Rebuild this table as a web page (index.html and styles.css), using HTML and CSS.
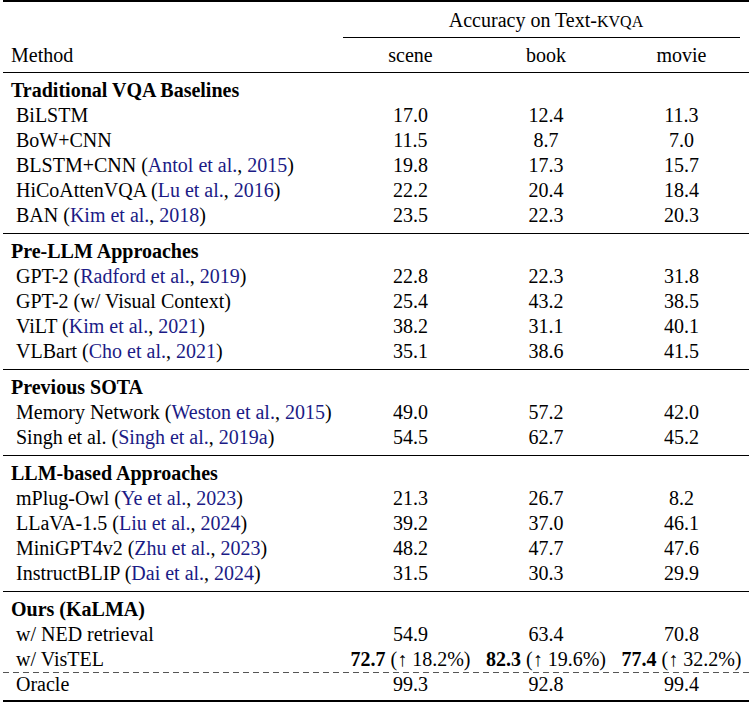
FILE: index.html
```html
<!DOCTYPE html>
<html lang="en">
<head>
<meta charset="utf-8">
<title>Accuracy on Text-KVQA</title>
<link rel="stylesheet" href="styles.css">
</head>
<body>
<div class="table">
  <div class="head">
    <div class="row">
      <div></div>
      <div class="acc"><span>Accuracy on Text-<span class="sc">kvqa</span></span></div>
    </div>
    <div class="cmid"></div>
    <div class="row">
      <div class="lbl">Method</div><div class="num">scene</div><div class="num">book</div><div class="num">movie</div>
    </div>
  </div>

  <div class="sec">
    <div class="row"><div class="lbl sh">Traditional VQA Baselines</div></div>
    <div class="row"><div class="lbl it">BiLSTM</div><div class="num">17.0</div><div class="num">12.4</div><div class="num">11.3</div></div>
    <div class="row"><div class="lbl it">BoW+CNN</div><div class="num">11.5</div><div class="num">8.7</div><div class="num">7.0</div></div>
    <div class="row"><div class="lbl it">BLSTM+CNN (<span class="cite">Antol et al.</span>, <span class="cite">2015</span>)</div><div class="num">19.8</div><div class="num">17.3</div><div class="num">15.7</div></div>
    <div class="row"><div class="lbl it">HiCoAttenVQA (<span class="cite">Lu et al.</span>, <span class="cite">2016</span>)</div><div class="num">22.2</div><div class="num">20.4</div><div class="num">18.4</div></div>
    <div class="row"><div class="lbl it">BAN (<span class="cite">Kim et al.</span>, <span class="cite">2018</span>)</div><div class="num">23.5</div><div class="num">22.3</div><div class="num">20.3</div></div>
  </div>

  <div class="sec">
    <div class="row"><div class="lbl sh">Pre-LLM Approaches</div></div>
    <div class="row"><div class="lbl it">GPT-2 (<span class="cite">Radford et al.</span>, <span class="cite">2019</span>)</div><div class="num">22.8</div><div class="num">22.3</div><div class="num">31.8</div></div>
    <div class="row"><div class="lbl it">GPT-2 (w/ Visual Context)</div><div class="num">25.4</div><div class="num">43.2</div><div class="num">38.5</div></div>
    <div class="row"><div class="lbl it">ViLT (<span class="cite">Kim et al.</span>, <span class="cite">2021</span>)</div><div class="num">38.2</div><div class="num">31.1</div><div class="num">40.1</div></div>
    <div class="row"><div class="lbl it">VLBart (<span class="cite">Cho et al.</span>, <span class="cite">2021</span>)</div><div class="num">35.1</div><div class="num">38.6</div><div class="num">41.5</div></div>
  </div>

  <div class="sec">
    <div class="row"><div class="lbl sh">Previous SOTA</div></div>
    <div class="row"><div class="lbl it">Memory Network (<span class="cite">Weston et al.</span>, <span class="cite">2015</span>)</div><div class="num">49.0</div><div class="num">57.2</div><div class="num">42.0</div></div>
    <div class="row"><div class="lbl it">Singh et al. (<span class="cite">Singh et al.</span>, <span class="cite">2019a</span>)</div><div class="num">54.5</div><div class="num">62.7</div><div class="num">45.2</div></div>
  </div>

  <div class="sec">
    <div class="row"><div class="lbl sh">LLM-based Approaches</div></div>
    <div class="row"><div class="lbl it">mPlug-Owl (<span class="cite">Ye et al.</span>, <span class="cite">2023</span>)</div><div class="num">21.3</div><div class="num">26.7</div><div class="num">8.2</div></div>
    <div class="row"><div class="lbl it">LLaVA-1.5 (<span class="cite">Liu et al.</span>, <span class="cite">2024</span>)</div><div class="num">39.2</div><div class="num">37.0</div><div class="num">46.1</div></div>
    <div class="row"><div class="lbl it">MiniGPT4v2 (<span class="cite">Zhu et al.</span>, <span class="cite">2023</span>)</div><div class="num">48.2</div><div class="num">47.7</div><div class="num">47.6</div></div>
    <div class="row"><div class="lbl it">InstructBLIP (<span class="cite">Dai et al.</span>, <span class="cite">2024</span>)</div><div class="num">31.5</div><div class="num">30.3</div><div class="num">29.9</div></div>
  </div>

  <div class="sec last">
    <div class="row"><div class="lbl sh">Ours (KaLMA)</div></div>
    <div class="row"><div class="lbl it">w/ NED retrieval</div><div class="num">54.9</div><div class="num">63.4</div><div class="num">70.8</div></div>
    <div class="row"><div class="lbl it">w/ VisTEL</div><div class="num"><b>72.7</b> (↑ 18.2%)</div><div class="num"><b>82.3</b> (↑ 19.6%)</div><div class="num"><b>77.4</b> (↑ 32.2%)</div></div>
    <div class="row dashed"><div class="lbl it">Oracle</div><div class="num">99.3</div><div class="num">92.8</div><div class="num">99.4</div></div>
  </div>
</div>
</body>
</html>
```

FILE: styles.css
```css
html, body {
  margin: 0;
  padding: 0;
  background: #ffffff;
}

body {
  font-family: "Liberation Serif", "Times New Roman", serif;
  font-size: 20px;
  color: #000000;
}

.table {
  width: 746px;
  margin: 0 3px;
  border-top: 2px solid #000;
  border-bottom: 2px solid #000;
}

.row {
  display: grid;
  grid-template-columns: 340px 135px 136px 135px;
  height: 25px;
  line-height: 25px;
  white-space: nowrap;
}

.head {
  padding: 6px 0 4px;
}

.acc {
  grid-column: 2 / 5;
  text-align: center;
}

.sc {
  font-variant: small-caps;
  font-size: 1.14em;
  line-height: 1;
}

.cmid {
  margin: 4px 9px 5px 340px;
  border-top: 1px solid #000;
}

.lbl {
  padding-left: 8px;
}

.lbl.sh {
  font-weight: bold;
  grid-column: 1 / 5;
}

.lbl.it {
  padding-left: 13px;
}

.num {
  text-align: center;
}

.num b {
  font-weight: bold;
}

.cite {
  color: #1b1b86;
}

.sec {
  border-top: 1px solid #000;
  padding: 5px 0;
}

.sec.last {
  padding-bottom: 3px;
}

.row.dashed {
  background-image: repeating-linear-gradient(to right, #555 0 6px, transparent 6px 10px);
  background-size: 100% 1px;
  background-repeat: no-repeat;
  background-position: 0 0;
}
```
